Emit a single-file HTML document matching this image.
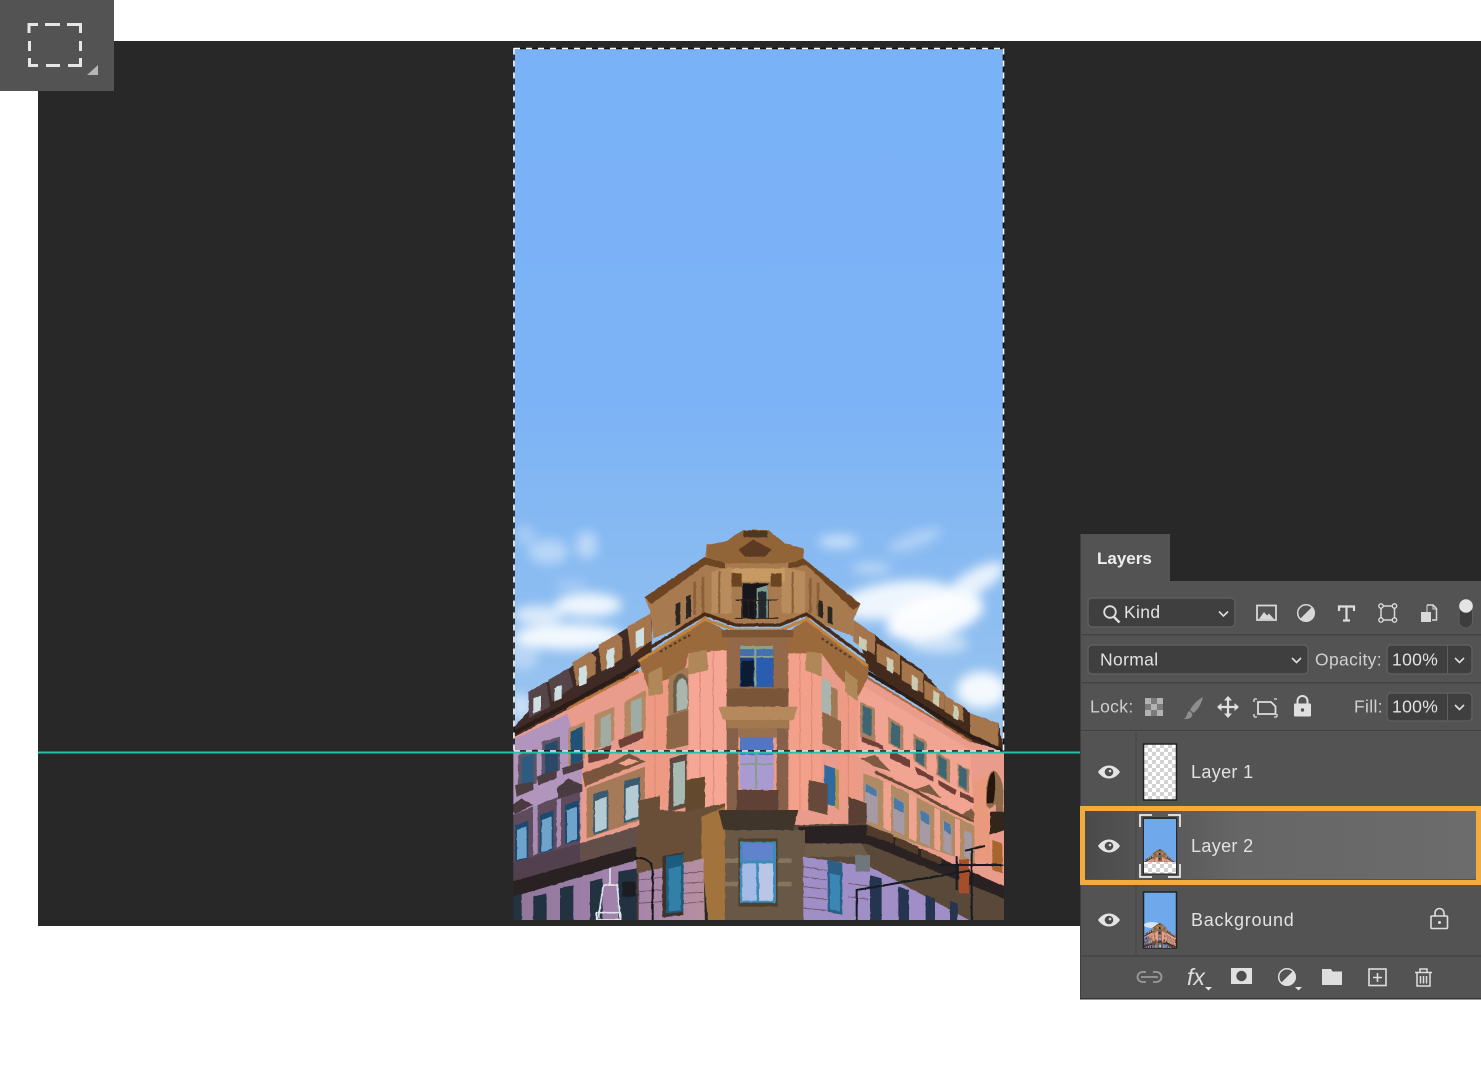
<!DOCTYPE html>
<html><head><meta charset="utf-8"><title>Layers</title>
<style>html,body{margin:0;padding:0;background:#fff;width:1481px;height:1080px;overflow:hidden}svg{display:block}
text{font-family:"Liberation Sans",sans-serif;font-size:17.5px;fill:#e2e2e2;letter-spacing:.35px}</style></head><body>
<svg width="1481" height="1080" viewBox="0 0 1481 1080" xmlns="http://www.w3.org/2000/svg">
<defs>
<linearGradient id="sky" x1="0" y1="48" x2="0" y2="750" gradientUnits="userSpaceOnUse"><stop offset="0" stop-color="#7ab2f8"/><stop offset=".5" stop-color="#7cb3f6"/><stop offset=".65" stop-color="#84b8f3"/><stop offset=".85" stop-color="#90bff0"/><stop offset="1" stop-color="#a0c8ee"/></linearGradient>
<filter id="b20" x="-30%" y="-30%" width="160%" height="160%"><feGaussianBlur stdDeviation="17"/></filter>
<filter id="b1" x="-2%" y="-2%" width="104%" height="104%"><feTurbulence type="fractalNoise" baseFrequency=".06" numOctaves="2" seed="4" result="n"/><feDisplacementMap in="SourceGraphic" in2="n" scale="5" xChannelSelector="R" yChannelSelector="G"/><feGaussianBlur stdDeviation="1"/></filter>
<pattern id="chk" width="8" height="8" patternUnits="userSpaceOnUse"><rect width="8" height="8" fill="#fff"/><rect width="4" height="4" fill="#d2d2d2"/><rect x="4" y="4" width="4" height="4" fill="#d2d2d2"/></pattern>
<linearGradient id="hl" x1="0" y1="0" x2="1" y2="0"><stop offset="0" stop-color="#4a4a4a"/><stop offset=".14" stop-color="#545454"/><stop offset=".4" stop-color="#666"/><stop offset="1" stop-color="#6c6c6c"/></linearGradient>
<linearGradient id="lav" x1="0" y1="0" x2="1" y2="0"><stop offset="0" stop-color="#8f7598"/><stop offset=".6" stop-color="#a384ae"/><stop offset="1" stop-color="#b78f9e"/></linearGradient>
<clipPath id="imgclip"><rect x="25" y="0" width="1472" height="1230"/></clipPath>
<clipPath id="th2"><rect x="1144" y="819" width="32" height="43"/></clipPath>
<clipPath id="th3"><rect x="1144" y="893" width="32" height="55"/></clipPath>
<g id="bld" filter="url(#b1)">
<!-- roofs -->
<polygon fill="#3f2a26" points="25,655 72,600 75,545 130,515 190,475 265,425 340,370 440,310 440,440 380,490 190,600 25,690"/>
<polygon fill="#42291f" points="1045,330 1110,375 1185,435 1250,480 1315,555 1375,590 1395,610 1480,640 1497,720 1400,700 1090,480"/>
<!-- walls -->
<polygon fill="#e99c8b" points="10,690 185,600 400,485 550,420 950,420 1060,490 1400,695 1510,730 1510,1150 1060,960 860,960 640,960 430,1000 230,1040 10,1110"/>
<polygon fill="#b295bd" points="10,695 185,612 232,740 226,1005 10,1070"/>
<polygon fill="#f6a695" points="550,425 665,420 665,900 550,900"/>
<polygon fill="#f3a08a" points="850,430 950,430 950,900 850,900"/>
<polygon fill="#ee9a82" points="420,530 490,505 490,880 420,900"/>
<polygon fill="#ee9b86" points="1000,505 1060,545 1060,880 1000,860"/>
<polygon fill="#f0a491" points="1060,520 1397,720 1405,940 1060,740"/>
<g stroke="#d98a75" stroke-width="3" fill="none"><path d="M585 430v470M625 425v475M885 430v470M920 430v470M450 520v370M1030 525v340"/></g>
<!-- roof cornice -->
<polyline fill="none" stroke="#2a1a16" stroke-width="12" points="15,675 190,582 400,468"/>
<polyline fill="none" stroke="#b9743f" stroke-width="8" points="185,598 400,484"/>
<polyline fill="none" stroke="#2a1a16" stroke-width="10" points="1060,470 1400,680 1495,722"/>
<polyline fill="none" stroke="#a8683a" stroke-width="6" points="1060,486 1400,696"/>
<!-- dormers left -->
<g fill="#a5744b"><polygon points="203,458 255,425 272,440 272,490 215,530"/><polygon points="280,405 338,372 352,385 352,445 290,485"/><polygon points="367,350 437,310 440,390 378,440"/></g>
<g fill="#54444a"><polygon points="70,545 125,515 135,590 72,625"/><polygon points="130,510 190,475 205,530 142,575"/></g>
<g fill="#cfe0e2"><polygon points="85,565 108,555 108,600 85,610"/><polygon points="148,535 170,525 170,565 148,575"/><polygon points="222,475 245,465 245,520 222,530"/><polygon points="305,420 328,412 328,470 305,478"/><polygon points="392,365 417,352 417,405 392,415"/></g>
<!-- dormers right -->
<g fill="#a5744b"><polygon points="1045,330 1110,375 1110,435 1045,395"/><polygon points="1115,400 1185,435 1185,495 1115,455"/><polygon points="1190,450 1255,490 1255,550 1190,510"/><polygon points="1258,510 1318,548 1318,600 1258,565"/><polygon points="1318,555 1375,590 1375,635 1318,605"/><polygon points="1395,610 1480,640 1480,710 1395,670"/></g>
<g fill="#c9ccb2"><polygon points="1062,378 1085,390 1085,425 1062,412"/><polygon points="1145,440 1165,450 1165,490 1145,480"/><polygon points="1220,495 1238,505 1238,545 1220,535"/><polygon points="1285,540 1302,550 1302,590 1285,580"/><polygon points="1345,585 1360,593 1360,632 1345,624"/></g>
<!-- attic -->
<polygon fill="#a87a50" points="420,268 600,145 605,105 660,95 715,85 715,60 790,60 790,85 840,100 895,115 895,145 1065,285 1045,330 1045,380 895,320 855,340 660,340 610,320 445,385 435,300"/>
<polygon fill="#6e4423" points="418,262 600,140 660,160 660,175 600,165 440,282"/>
<polygon fill="#6e4423" points="1067,282 895,145 850,160 850,175 905,165 1045,300"/>
<polygon fill="#b98c5d" points="620,185 680,170 680,310 620,310"/>
<polygon fill="#b98c5d" points="830,170 900,185 900,310 830,310"/>
<g fill="#8b6038"><rect x="590" y="200" width="8" height="110"/><rect x="565" y="215" width="8" height="100"/><rect x="912" y="205" width="8" height="105"/><rect x="935" y="218" width="8" height="100"/><rect x="640" y="185" width="6" height="125"/><rect x="860" y="185" width="6" height="125"/></g>
<polygon fill="#926539" points="605,105 660,95 715,60 790,60 840,100 895,115 895,145 840,160 660,160 605,140"/>
<polygon fill="#5b3b22" points="700,120 745,88 800,120 780,140 720,140"/>
<rect x="716" y="62" width="72" height="20" fill="#4f3522"/>
<polygon fill="#c89a64" points="680,175 840,175 840,215 680,215"/>
<rect x="680" y="190" width="30" height="40" fill="#6b4424"/><rect x="797" y="190" width="33" height="40" fill="#6b4424"/>
<rect x="712" y="220" width="78" height="105" fill="#16181e"/><polygon points="755,235 790,225 790,325 755,325" fill="#7f9b8e"/><rect x="760" y="245" width="24" height="80" fill="#242a30"/>
<g stroke="#2d241f" stroke-width="3" fill="none"><path d="M690 270h130M690 325h130M710 270v55M730 270v55M750 270v55M770 270v55M790 270v55"/></g>
<g fill="#2a2520"><polygon points="512,282 526,276 526,342 512,348"/><polygon points="543,260 558,254 558,320 543,326"/><polygon points="940,268 954,274 954,325 940,320"/><polygon points="968,288 982,295 982,345 968,340"/></g>
<!-- main cornice -->
<polygon fill="#9a6a3e" points="400,452 600,330 660,360 855,360 905,330 1090,462 1090,500 1060,560 1000,500 950,430 850,430 665,420 550,430 540,480 430,535"/>
<polyline fill="none" stroke="#4a2b14" stroke-width="10" points="395,438 600,312 690,345 825,345 905,312 1095,452"/>
<polyline fill="none" stroke="#c08341" stroke-width="9" points="400,454 600,328 690,360 825,360 905,328 1088,468"/>
<g fill="none" stroke="#5a3a20" stroke-width="7" stroke-dasharray="8 8"><path d="M465 425l90-50M950 385l90 60"/></g>
<polygon fill="#b08758" points="430,490 470,470 475,550 430,560"/><polygon fill="#b08758" points="550,430 605,420 610,480 550,495"/><polygon fill="#b08758" points="905,425 950,430 950,500 900,480"/><polygon fill="#b08758" points="1020,480 1058,510 1058,575 1020,545"/>
<!-- arched windows -->
<polygon fill="#9f7a54" points="490,500 550,470 550,600 490,625"/><path d="M505 610V530q0-32 22-40q23 8 23 35V595z" fill="#6b5c48"/><path d="M515 605V535q0-25 17-32q16 8 16 30V595z" fill="#a9b5ad"/>
<path d="M950 505q20 0 28 25V615l-28-10z" fill="#a9b5ad"/><path d="M978 530V620l20 10V540z" fill="#9f7a54"/>
<polygon fill="#8d6646" points="485,620 550,600 550,705 485,720"/><polygon fill="#8d6646" points="952,605 1008,635 1008,725 952,700"/>
<!-- center -->
<rect x="665" y="375" width="185" height="215" fill="#94694a"/>
<rect x="650" y="360" width="215" height="22" fill="#7d5430"/>
<rect x="705" y="408" width="100" height="122" fill="#1f3f7e"/><rect x="705" y="408" width="100" height="10" fill="#89a38b"/><rect x="705" y="418" width="100" height="24" fill="#4470ad"/><rect x="754" y="442" width="50" height="88" fill="#2a5cb0"/><rect x="708" y="452" width="38" height="78" fill="#0f1c35"/><rect x="748" y="415" width="6" height="115" fill="#8aa293"/><rect x="705" y="438" width="100" height="5" fill="#8aa293"/>
<polygon fill="#7a5439" points="665,535 850,535 850,590 665,590"/>
<polygon fill="#b6895c" points="640,590 878,590 865,630 655,630"/>
<rect x="663" y="630" width="190" height="30" fill="#a27850"/>
<rect x="665" y="655" width="35" height="245" fill="#86604a"/><rect x="815" y="655" width="35" height="245" fill="#86604a"/><rect x="700" y="655" width="115" height="28" fill="#9a7150"/>
<rect x="705" y="682" width="100" height="156" fill="#5674c0"/><rect x="705" y="735" width="100" height="103" fill="#a99bd2"/><rect x="750" y="725" width="6" height="113" fill="#879d8c"/><rect x="705" y="760" width="100" height="5" fill="#879d8c"/>
<rect x="695" y="840" width="125" height="60" fill="#5e4234"/>
<!-- left upper windows -->
<g fill="#b48863"><polygon points="358,575 422,540 422,660 358,690"/><polygon points="268,615 328,590 328,690 268,720"/><polygon points="190,655 240,635 240,745 190,770"/></g>
<g fill="#5d5565"><polygon points="110,695 165,680 165,780 110,800"/><polygon points="40,735 95,715 95,820 40,835"/></g>
<g fill="#9eaca4"><polygon points="378,575 410,562 410,660 378,672"/><polygon points="287,625 318,610 318,705 287,715"/></g>
<polygon fill="#245176" points="197,665 233,650 233,750 197,765"/><polygon fill="#2a4868" points="120,705 158,690 158,780 120,795"/><polygon fill="#2d5c80" points="50,745 85,730 85,815 50,825"/>
<g fill="#6f4138"><polygon points="340,690 415,660 415,685 345,715"/><polygon points="250,730 320,705 310,745 250,760"/></g>
<g fill="#4d3c42"><polygon points="170,775 235,750 235,775 175,795"/><polygon points="95,800 155,780 155,805 100,825"/><polygon points="30,825 85,815 85,840 35,860"/></g>
<!-- left row 2 -->
<polygon fill="#a57a58" points="245,835 420,770 420,925 245,985"/>
<polygon fill="#79553c" points="232,790 325,755 372,730 422,755 330,790 240,830"/>
<polygon fill="#efa58c" points="340,760 372,745 402,755 362,768"/>
<polygon fill="#3b5a6e" points="357,815 405,800 405,925 357,940"/><polygon fill="#3b5a6e" points="265,852 310,838 310,960 265,975"/>
<polygon fill="#b4cbd4" points="362,835 400,822 400,920 362,932"/><polygon fill="#b4cbd4" points="270,872 305,860 305,955 270,968"/>
<polygon fill="#5f4b5c" points="10,920 225,835 225,1000 10,1065"/>
<polygon fill="#a88cb8" points="84,890 98,885 98,1030 84,1035"/><polygon fill="#a88cb8" points="155,870 168,865 168,1005 155,1012"/>
<polygon fill="#493a40" points="155,835 190,805 232,825 232,845 160,865"/><polygon fill="#493a40" points="15,890 50,865 85,885 30,912"/>
<polygon fill="#1f4a6e" points="180,885 222,872 222,992 180,1003"/><polygon fill="#1f4a6e" points="105,915 145,900 145,1020 105,1030"/><polygon fill="#1f4a6e" points="30,945 70,932 70,1045 30,1055"/>
<polygon fill="#6ea4cc" points="186,900 216,890 216,988 186,998"/><polygon fill="#6ea4cc" points="110,930 140,920 140,1016 110,1026"/><polygon fill="#6ea4cc" points="36,960 65,950 65,1042 36,1050"/>
<polygon fill="#5d4a40" points="495,745 545,732 545,892 490,905"/>
<polygon fill="#a6bab1" points="505,760 540,752 540,880 505,890"/>
<!-- right upper -->
<g fill="#a98160"><polygon points="1065,575 1110,595 1110,695 1065,680"/><polygon points="1150,620 1195,650 1195,725 1150,700"/><polygon points="1225,670 1265,695 1265,780 1225,750"/><polygon points="1295,725 1335,750 1335,820 1295,795"/><polygon points="1358,760 1392,780 1392,850 1358,830"/></g>
<g fill="#3d6672"><polygon points="1073,585 1100,598 1100,680 1073,668"/><polygon points="1158,635 1185,650 1185,715 1158,700"/><polygon points="1232,685 1258,700 1258,770 1232,752"/><polygon points="1300,735 1325,752 1325,810 1300,792"/><polygon points="1362,765 1385,780 1385,840 1362,825"/></g>
<g fill="#6f4138"><polygon points="1070,680 1135,705 1135,720 1070,695"/><polygon points="1155,720 1215,750 1215,775 1155,745"/><polygon points="1230,770 1285,800 1285,815 1235,790"/><polygon points="1300,810 1355,840 1350,855 1300,825"/><polygon points="1365,845 1408,865 1408,880 1365,860"/></g>
<!-- right row 2 -->
<polygon fill="#b08a62" points="1075,790 1130,810 1410,950 1410,1060 1075,950"/>
<polygon fill="#f0a48f" points="1135,810 1158,822 1158,965 1135,955"/><polygon fill="#f0a48f" points="1212,850 1235,862 1235,995 1212,985"/><polygon fill="#f0a48f" points="1288,892 1305,900 1305,1025 1288,1015"/><polygon fill="#f0a48f" points="1350,925 1365,932 1365,1045 1350,1038"/>
<polyline fill="none" stroke="#6a4830" stroke-width="9" points="1110,785 1160,810 1235,845 1305,885 1365,915 1420,940"/>
<polygon fill="#7d5a3f" points="1065,745 1110,735 1158,785 1110,770"/><polygon fill="#7d5a3f" points="1230,840 1272,822 1308,865 1270,850"/><polygon fill="#7d5a3f" points="1368,915 1398,895 1428,935 1400,925"/>
<g fill="#a59aa6"><polygon points="1080,820 1118,838 1118,945 1080,930"/><polygon points="1165,860 1198,878 1198,975 1165,960"/><polygon points="1245,898 1275,915 1275,1010 1245,995"/><polygon points="1315,930 1340,945 1340,1035 1315,1020"/><polygon points="1378,960 1400,972 1400,1050 1378,1040"/></g>
<g fill="#4b79a8"><polygon points="1082,822 1115,838 1115,860 1082,845"/><polygon points="1167,862 1196,878 1196,910 1167,895"/><polygon points="1247,900 1273,915 1273,945 1247,930"/><polygon points="1317,932 1338,945 1338,975 1317,960"/></g>
<polygon fill="#2e6b9d" points="958,765 990,775 990,890 958,880"/>
<polygon fill="#b3914f" points="990,775 1002,780 1002,900 990,895"/>
<!-- arch right -->
<polygon fill="#e99a7c" points="1405,815 1445,800 1460,1060 1410,1050"/>
<path d="M1445 890c-5-60 5-105 20-108 16 0 30 40 30 60v70h-20l-5-30-15 15z" fill="#8d6a48"/>
<path d="M1445 880c0-60 10-95 22-95 5 15 5 60-2 95z" fill="#26180f"/>
<path d="M1455 905h45v55l-45 15z" fill="#33251f"/>
<polygon fill="#a8662f" points="1462,990 1492,1000 1492,1090 1462,1080"/>
<!-- lower stone -->
<polygon fill="#6a4f38" points="400,872 465,858 465,955 405,975"/>
<polygon fill="#64492f" points="540,812 600,800 600,905 540,920"/>
<polygon fill="#66493a" points="910,810 968,822 968,915 910,900"/>
<polygon fill="#5a4030" points="1030,860 1085,880 1085,965 1030,945"/>
<polygon fill="#6a4f39" points="465,900 540,905 660,880 660,1040 600,1045 395,1090 395,1010 225,1065 225,1000 395,950"/>
<polygon fill="#a2733d" points="590,920 660,890 660,1240 610,1240 590,1045"/>
<polygon fill="#62504a" points="225,1000 395,950 395,1010 225,1055"/>
<polygon fill="#534050" points="10,1060 225,1000 225,1065 10,1125"/>
<polygon fill="#5a4a38" points="860,945 1080,940 1510,1140 1510,1240 1400,1240 1095,1070 895,1040 860,1040"/>
<polygon fill="#6e5b48" points="860,960 1050,960 1090,1040 895,1040"/>
<g fill="#2b2320"><polygon points="10,1118 390,1010 395,1050 10,1165"/><polygon points="880,950 1085,945 1510,1135 1510,1170 1080,1000 880,1000"/></g>
<g fill="#513b2c"><polygon points="1085,945 1165,975 1165,1000 1085,975"/><polygon points="1170,980 1240,1010 1240,1035 1170,1005"/><polygon points="1248,1015 1310,1045 1310,1065 1248,1040"/></g>
<!-- center stone lower -->
<polygon fill="#40342c" points="640,900 880,900 865,960 655,960"/>
<rect x="660" y="960" width="240" height="285" fill="#6a5947"/>
<rect x="700" y="985" width="118" height="205" fill="#4f3f2d"/>
<rect x="705" y="995" width="108" height="183" fill="#3d8bb6"/><rect x="712" y="1000" width="92" height="52" fill="#5f84cd"/><rect x="712" y="1060" width="42" height="112" fill="#a3bbe6"/><rect x="762" y="1060" width="42" height="112" fill="#bac6e6"/>
<g fill="#85745e"><rect x="660" y="1045" width="40" height="14"/><rect x="660" y="1115" width="40" height="14"/><rect x="820" y="1045" width="40" height="14"/><rect x="820" y="1115" width="40" height="14"/></g>
<!-- ground -->
<polygon fill="url(#lav)" points="10,1165 395,1050 395,1090 595,1045 600,1245 10,1245"/>
<polygon fill="#a08fc6" points="895,1040 1095,1070 1420,1245 895,1245"/>
<rect x="393" y="1090" width="8" height="150" fill="#4a3a34"/>
<g stroke="#6a5268" stroke-width="2.500" fill="none"><path d="M535 1090l60-6M535 1120l60-4M535 1150l60-3M535 1180l60-4M400 1110l70-8M400 1145l70-6M400 1180l70-5"/><path d="M895 1070l70 12M895 1100l70 10M895 1130l70 8M895 1160l70 8M895 1195l70 6M1030 1120l60 8M1030 1160l60 8"/></g>
<polygon fill="#3f332c" points="472,1040 535,1025 535,1215 472,1222"/>
<polygon fill="#1f5c7e" points="483,1040 535,1032 535,1205 483,1212"/><polygon fill="#3080a8" points="491,1075 528,1068 528,1200 491,1205"/>
<g fill="#22333f"><polygon points="255,1115 292,1105 292,1240 255,1240"/><polygon points="165,1135 205,1125 205,1240 165,1240"/><polygon points="85,1160 125,1150 125,1240 85,1240"/><polygon points="340,1085 395,1075 395,1240 340,1240"/><polygon points="10,1165 50,1150 50,1240 10,1240"/></g>
<polygon fill="#2b5f86" points="968,1048 1012,1060 1012,1215 968,1205"/><polygon fill="#3787b4" points="975,1090 1005,1096 1005,1205 975,1198"/>
<g fill="#263450"><polygon points="1095,1095 1130,1105 1130,1240 1095,1240"/><polygon points="1180,1130 1212,1140 1212,1240 1180,1240"/><polygon points="1262,1155 1290,1165 1290,1240 1262,1240"/><polygon points="1335,1172 1358,1182 1358,1240 1335,1240"/></g>
<polygon fill="#70777a" points="1050,1035 1095,1035 1095,1085 1052,1085"/>
<g fill="none" stroke="#dfe4ea" stroke-width="5"><path d="M315 1075v50M295 1125h42l8 100M295 1125l-15 100M275 1208h72v22H275z"/></g>
<path d="M390 1045c30-5 50 10 53 35v160" fill="none" stroke="#17161a" stroke-width="6"/>
<rect x="352" y="1115" width="40" height="45" fill="#1a1c20"/>
<rect x="1362" y="1048" width="30" height="102" fill="#a84e2c"/>
<path d="M1055 1240v-100l340-58M1400 1020v220M1380 1022l60-14M1355 1040v100M1300 1065h195" fill="none" stroke="#171a22" stroke-width="6"/>
</g>
</defs>

<rect width="1481" height="1080" fill="#fff"/>
<rect x="38" y="41" width="1443" height="885" fill="#282828"/>

<!-- image -->
<rect x="513" y="48" width="491" height="705" fill="url(#sky)"/>
<g transform="translate(505 510) scale(.33333)">
<g clip-path="url(#imgclip)">
<g fill="#fff" filter="url(#b20)">
<ellipse cx="130" cy="125" rx="60" ry="38" opacity=".4"/><ellipse cx="245" cy="105" rx="32" ry="42" opacity=".45"/><ellipse cx="60" cy="75" rx="28" ry="28" opacity=".3"/>
<ellipse cx="250" cy="285" rx="100" ry="36" opacity=".85"/><ellipse cx="100" cy="315" rx="75" ry="28" opacity=".7"/><ellipse cx="190" cy="380" rx="165" ry="38" opacity=".9"/><ellipse cx="55" cy="430" rx="45" ry="50" opacity=".35"/><ellipse cx="50" cy="590" rx="30" ry="40" opacity=".5"/><ellipse cx="200" cy="225" rx="50" ry="12" opacity=".3"/>
<ellipse cx="1170" cy="270" rx="175" ry="55" transform="rotate(-8 1170 270)" opacity=".85"/><ellipse cx="1290" cy="320" rx="150" ry="62" transform="rotate(-15 1290 320)" opacity=".95"/><ellipse cx="1410" cy="215" rx="100" ry="36" transform="rotate(-30 1410 215)" opacity=".8"/><ellipse cx="1000" cy="95" rx="60" ry="20" opacity=".55"/><ellipse cx="1230" cy="90" rx="85" ry="22" opacity=".35" transform="rotate(-20 1230 90)"/><ellipse cx="1430" cy="540" rx="75" ry="55" opacity=".9"/><ellipse cx="1300" cy="400" rx="90" ry="28" opacity=".55"/><ellipse cx="1100" cy="175" rx="60" ry="18" opacity=".4"/>
</g>
<use href="#bld"/>
</g></g>

<!-- marquee -->
<g fill="none" stroke-width="1.6">
<path d="M514 48.500H1004M514 48.500V752M1003.500 48.500V752M514 751H1004" stroke="#111"/>
<path d="M514 48.500H1004M514 48.500V752M1003.500 48.500V752M514 751H1004" stroke="#fff" stroke-dasharray="6 6"/>
</g>
<rect x="38" y="751.500" width="1043" height="2" fill="#26c0ab"/>

<!-- tool -->
<rect width="114" height="91" fill="#535353"/>
<path d="M29 33V24.500H38M45 24.500H60M67 24.500H80.500V33M80.500 41V51M80.500 58V65.500H68M60 65.500H46M38 65.500H29.500V58M29.500 51V41" fill="none" stroke="#e6e6e6" stroke-width="3"/>
<polygon points="98,65 98,75 87,75" fill="#b5b5b5"/>

<!-- Layers panel -->
<rect x="1080" y="581" width="401" height="418" fill="#535353"/>
<rect x="1081" y="534" width="89" height="49" fill="#535353"/>
<rect x="1080" y="534" width="1" height="465" fill="#3f3f3f"/>
<rect x="1080" y="998" width="401" height="1.500" fill="#333"/>
<text x="1097" y="564" style="font-weight:700;font-size:17px;fill:#eee;letter-spacing:0">Layers</text>

<g fill="#3f3f3f" stroke="#5e5e5e" stroke-width="1.500">
<rect x="1088" y="598" width="147" height="29" rx="4"/>
<rect x="1088" y="645" width="220" height="29" rx="4"/>
<rect x="1387" y="645" width="85" height="29" rx="4"/>
<rect x="1387" y="693" width="85" height="28" rx="4"/>
</g>
<rect x="1447" y="645" width="1" height="29" fill="#5e5e5e"/><rect x="1447" y="693" width="1" height="28" fill="#5e5e5e"/>
<rect x="1080" y="634" width="401" height="1.500" fill="#434343"/>
<rect x="1080" y="682" width="401" height="1.500" fill="#434343"/>
<rect x="1080" y="730" width="401" height="1" fill="#434343"/>

<g fill="none" stroke="#dedede" stroke-width="1.800">
<circle cx="1110" cy="612" r="5.800"/><path d="M1114 617l5.500 5.500" stroke-width="2.400"/>
<path d="M1219 611.500l4.500 4.500 4.500-4.500M1292 658l4.500 4.500 4.500-4.500M1455 658l4.500 4.500 4.500-4.500M1455 705l4.500 4.500 4.500-4.500" stroke-width="1.600"/>
</g>
<text x="1124" y="618">Kind</text>
<text x="1100" y="665.500">Normal</text>
<text x="1315" y="665.500" style="fill:#cfcfcf">Opacity:</text>
<text x="1392" y="665.500">100%</text>
<text x="1090" y="712.500" style="fill:#cfcfcf">Lock:</text>
<text x="1354" y="712.500" style="fill:#cfcfcf">Fill:</text>
<text x="1392" y="712.500">100%</text>

<!-- filter icons -->
<rect x="1257" y="605.500" width="19" height="14.500" fill="none" stroke="#d8d8d8" stroke-width="1.800"/><path d="M1259 619l5-7 3 3.500 2-2 5 5.500z" fill="#d8d8d8"/>
<circle cx="1306" cy="613" r="8.300" fill="none" stroke="#d8d8d8" stroke-width="1.500"/><path d="M1312 607a8.300 8.300 0 0 1-11.800 11.800z" fill="#d8d8d8"/>
<path d="M1339 611v-4.500h15v4.500M1346.500 607v13.500M1343 620.500h7" fill="none" stroke="#dedede" stroke-width="2.200"/>
<rect x="1381" y="606" width="13.500" height="14" fill="none" stroke="#d8d8d8" stroke-width="1.500"/>
<g fill="#535353" stroke="#e0e0e0" stroke-width="1.300"><circle cx="1381" cy="606" r="2.200"/><circle cx="1394.500" cy="606" r="2.200"/><circle cx="1381" cy="620" r="2.200"/><circle cx="1394.500" cy="620" r="2.200"/></g>
<path d="M1427 605h6l3.500 3.500V620h-4.500" fill="none" stroke="#d8d8d8" stroke-width="1.500"/><path d="M1427 605v7M1433 605v4h3.500" fill="none" stroke="#d8d8d8" stroke-width="1"/>
<rect x="1421" y="612" width="10" height="10" fill="#d8d8d8"/>
<rect x="1459" y="601" width="13.500" height="27" rx="6.700" fill="#3d3d3d" stroke="#5e5e5e"/><circle cx="1466" cy="606" r="6.800" fill="#e4e4e4"/>

<!-- lock icons -->
<g fill="#b2b2b2"><rect x="1145" y="698" width="18" height="18" fill="#7c7c7c"/><rect x="1145" y="698" width="6" height="6"/><rect x="1157" y="698" width="6" height="6"/><rect x="1151" y="704" width="6" height="6"/><rect x="1145" y="710" width="6" height="6"/><rect x="1157" y="710" width="6" height="6"/></g>
<path d="M1203 697c-6 3-11 9-13 13l3.500 3c4-3 8-9 9.500-16zM1189.500 711c-2.500 1-2.500 4-3 5-.5 1.500-1.500 2-3 2.500 3 1 7 .5 8.500-2.500.8-1.500.2-3-2.500-5z" fill="#8e8e8e"/>
<path d="M1228 697v20M1218 707h20" stroke="#e0e0e0" stroke-width="2.200" fill="none"/>
<path d="M1224 700.500l4-4.500 4 4.500zM1224 713.500l4 4.500 4-4.500zM1221.500 703l-4.500 4 4.500 4zM1234.500 703l4.500 4-4.500 4z" fill="#e0e0e0"/>
<path d="M1258 702h13l4.500 4.500V714h-17.500z" fill="none" stroke="#dedede" stroke-width="1.800"/>
<path d="M1254 699h3M1254 717h3M1274 717h3M1274 699h3M1254 699v3M1254 714v3M1277 714v3" stroke="#dedede" stroke-width="1.300" fill="none"/>
<rect x="1294" y="703.500" width="17" height="13" rx="1" fill="#e0e0e0"/><path d="M1297.500 704v-3a5 5 0 0 1 10 0v3" fill="none" stroke="#e0e0e0" stroke-width="2"/><circle cx="1302.500" cy="710" r="1.700" fill="#535353"/>

<!-- rows -->
<rect x="1085" y="811" width="391" height="68" fill="url(#hl)"/>
<rect x="1135.500" y="731" width="1" height="225" fill="#464646"/>
<rect x="1080" y="955.500" width="401" height="1.200" fill="#434343"/>
<path d="M1082.500 808.500H1478.500V882.500H1082.500Z" fill="none" stroke="#f4ab3d" stroke-width="5"/>

<defs><g id="eye"><path d="M-11 0c3-4.500 7-6.500 11-6.500S8 -4.500 11 0c-3 4.500-7 6.500-11 6.500S-8 4.500-11 0z" fill="#e4e4e4"/><circle r="4.300" fill="#4c4c4c"/><circle cx="1" cy="-1" r="1.300" fill="#ddd"/></g></defs>
<use href="#eye" x="1109" y="772"/><use href="#eye" x="1109" y="846"/><use href="#eye" x="1109" y="920"/>

<rect x="1143.500" y="744" width="33" height="56" fill="url(#chk)" stroke="#222" stroke-width="1.500"/>
<rect x="1143.500" y="818" width="33" height="56" fill="#333" stroke="#2a2a2a" stroke-width="1.500"/>
<rect x="1144" y="819" width="32" height="43" fill="#6fa9ec"/>
<rect x="1144" y="862" width="32" height="11.500" fill="url(#chk)"/>
<g clip-path="url(#th2)"><use href="#bld" transform="translate(1143.500 848) scale(.0217)"/></g>
<path d="M1140 827v-12h12M1168 815h12v12M1140 864v13h12M1168 877h12v-13" fill="none" stroke="#eee" stroke-width="1.700"/>
<rect x="1143.500" y="892" width="33" height="56" fill="#6fa9ec" stroke="#222" stroke-width="1.500"/>
<g clip-path="url(#th3)"><ellipse cx="1152" cy="925" rx="8" ry="3" fill="#d7e4f4"/><use href="#bld" transform="translate(1143.500 922) scale(.0217)"/></g>

<text x="1191" y="778" style="font-size:18px">Layer 1</text>
<text x="1191" y="852" style="font-size:18px">Layer 2</text>
<text x="1191" y="926" style="font-size:18px;letter-spacing:.75px">Background</text>
<rect x="1431" y="916" width="16.500" height="12.500" rx="1" fill="none" stroke="#dedede" stroke-width="1.600"/><path d="M1435 916v-3a4.500 4.500 0 0 1 9 0v3" fill="none" stroke="#dedede" stroke-width="1.600"/><circle cx="1439.500" cy="922.500" r="1.500" fill="#dedede"/>

<!-- footer icons -->
<path d="M1146 972h-3.500a4.500 4.500 0 0 0 0 10h3.500M1153 972h3.500a4.500 4.500 0 0 1 0 10h-3.500M1141 977h17" fill="none" stroke="#9a9a9a" stroke-width="1.800"/>
<text x="1187" y="985" style="font-style:italic;font-size:23px;fill:#dedede;letter-spacing:0">fx</text>
<polygon points="1205,987 1212,987 1208.500,990.500" fill="#e4e4e4"/>
<rect x="1231" y="968" width="21" height="16" fill="#e0e0e0"/><circle cx="1241.500" cy="976" r="5.200" fill="#4c4c4c"/>
<circle cx="1287" cy="977" r="8.300" fill="none" stroke="#e0e0e0" stroke-width="1.500"/><path d="M1293 971a8.300 8.300 0 0 1-11.800 11.800z" fill="#e0e0e0"/>
<polygon points="1295,987 1302,987 1298.500,990.500" fill="#e4e4e4"/>
<path d="M1322 985v-16h9l1.500 2.500H1342V985z" fill="#dedede"/>
<rect x="1369" y="969" width="17" height="16.500" fill="none" stroke="#dedede" stroke-width="1.600"/><path d="M1377.500 973v9M1373 977.500h9" stroke="#dedede" stroke-width="1.600"/>
<path d="M1415 972.500h17M1420 972v-3h7v3M1417 973v13h13v-13M1420.500 976v7.500M1423.500 976v7.500M1426.500 976v7.500" fill="none" stroke="#dedede" stroke-width="1.500"/>
</svg>
</body></html>
